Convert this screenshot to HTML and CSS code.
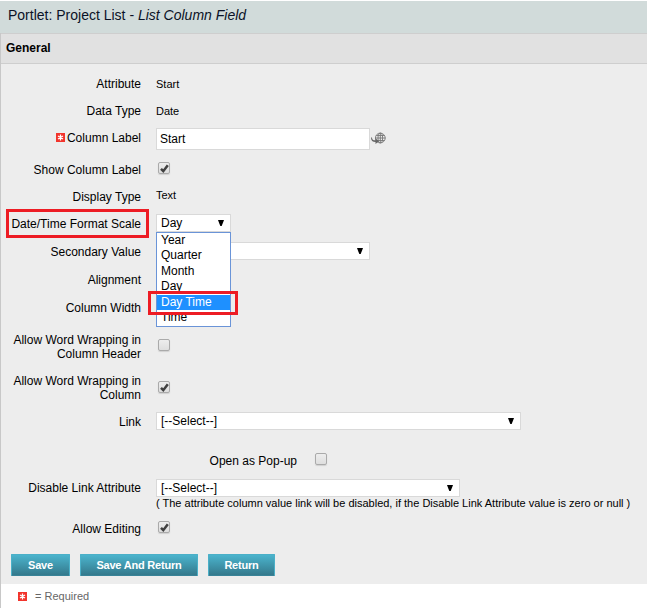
FILE: index.html
```html
<!DOCTYPE html>
<html lang="en">
<head>
<meta charset="utf-8">
<title>Portlet: Project List</title>
<link rel="stylesheet" href="styles.css">
</head>
<body>
<svg class="defs" aria-hidden="true">
  <symbol id="star" viewBox="0 0 9 9"><rect width="9" height="9" fill="#f2342c"/><path d="M4.5 1.5v6M2 3l5 3M7 3L2 6" stroke="#fff" stroke-width="1.300"/></symbol>
  <symbol id="tick" viewBox="0 0 13 13"><path d="M3 6.800l2.300 2.400L9.800 3.300" fill="none" stroke="#404040" stroke-width="2.500"/></symbol>
  <symbol id="arrow" viewBox="0 0 6 6"><path d="M0 0h6L3.700 6H2.300z" fill="#000"/></symbol>
</svg>
<header class="title">Portlet: Project List - <em>List Column Field</em></header>
<main class="frame">
  <h2 class="section">General</h2>
  <form class="form">
    <div class="row h27"><span class="label">Attribute</span><span class="value">Start</span></div>
    <div class="row h27"><span class="label">Data Type</span><span class="value">Date</span></div>
    <div class="row h29"><span class="label up"><svg class="star"><use href="#star"/></svg>Column Label</span><span class="input">Start</span>
      <svg class="globe" viewBox="0 0 15 13"><g fill="none" stroke="#777" stroke-width="0.900"><circle cx="9.300" cy="6" r="4.900"/><ellipse cx="9.300" cy="6" rx="2.300" ry="4.900"/><path d="M9.300 1v10M4.500 6h10M5.300 3.500h8M5.300 8.500h8"/></g><path d="M1 5.500C1 7.500 2 8.300 4.500 8.300V6.300L8 9.300 4.500 12v-1.900C1.500 10.100 0 8.500 0 5.500z" fill="#666"/></svg>
    </div>
    <div class="row h30"><span class="label down">Show Column Label</span><span class="check"><svg><use href="#tick"/></svg></span></div>
    <div class="row h27"><span class="label">Display Type</span><span class="value raised">Text</span></div>
    <div class="row h28"><span class="label">Date/Time Format Scale<i class="mark mark-label"></i></span>
      <span class="select scale">Day<svg class="arrow"><use href="#arrow"/></svg>
        <span class="menu"><span>Year</span><span>Quarter</span><span>Month</span><span>Day</span><span class="active">Day Time</span><span>Time</span><i class="mark mark-option"></i></span>
      </span>
    </div>
    <div class="row h28"><span class="label">Secondary Value</span><span class="select secondary"><svg class="arrow"><use href="#arrow"/></svg></span></div>
    <div class="row h28"><span class="label">Alignment</span></div>
    <div class="row h28"><span class="label">Column Width</span></div>
    <div class="row h46"><span class="label down">Allow Word Wrapping in Column Header</span><span class="check"></span></div>
    <div class="row h40"><span class="label">Allow Word Wrapping in Column</span><span class="check raised"><svg><use href="#tick"/></svg></span></div>
    <div class="row h27"><span class="label">Link</span><span class="select link">[--Select--]<svg class="arrow"><use href="#arrow"/></svg></span></div>
    <div class="row popup"><span class="label">Open as Pop-up</span><span class="check raised"></span></div>
    <div class="row h28"><span class="label">Disable Link Attribute</span><span class="select disable">[--Select--]<svg class="arrow"><use href="#arrow"/></svg></span></div>
    <p class="note">( The attribute column value link will be disabled, if the Disable Link Attribute value is zero or null )</p>
    <div class="row h28"><span class="label nudge">Allow Editing</span><span class="check raised"><svg><use href="#tick"/></svg></span></div>
    <div class="actions"><button type="button" class="save">Save</button><button type="button" class="save-return">Save And Return</button><button type="button" class="return">Return</button></div>
  </form>
  <footer class="legend"><svg class="star"><use href="#star"/></svg>= Required</footer>
</main>
</body>
</html>
```
FILE: styles.css
```css
* { box-sizing: border-box; }
body { margin: 0; padding-top: 1px; width: 647px; height: 608px; overflow: hidden; background: #fff; font: 12px/14px "Liberation Sans", Arial, sans-serif; color: #000; }
.defs { position: absolute; width: 0; height: 0; }
.title { height: 32px; background: #d1dbda; padding: 6px 0 0 8px; font-size: 14px; line-height: 17px; color: #0b1226; }
.frame { height: 575px; border-left: 1px solid #c8c8c8; }
.section { margin: 0; height: 31px; background: #e1e1e1; border: solid #cecece; border-width: 1px 0; padding-left: 5px; font-size: 12px; line-height: 29px; }
.form { height: 520px; padding-top: 6px; background: #ededed; }
.row { display: flex; align-items: center; }
.h27 { height: 27px; }
.h28 { height: 28px; }
.h29 { height: 29px; }
.h30 { height: 30px; }
.h40 { height: 40px; }
.h46 { height: 46px; }
.label { position: relative; width: 140px; padding-left: 5px; margin-right: 15px; text-align: right; flex: none; }
.up { margin-bottom: 2px; }
.down { margin-top: 3px; }
.nudge { margin-top: 2px; }
.value { font-size: 11px; }
.star { width: 9px; height: 9px; margin-right: 2px; }
.input { width: 214px; height: 22px; border: 1px solid #d9d9d9; background: #fff; padding-left: 3px; line-height: 20px; }
.globe { width: 15px; height: 13px; margin-left: 1px; }
.check { display: block; width: 12px; height: 12px; margin-left: 2px; border: 1px solid #aaa; border-radius: 2px; background: linear-gradient(#ededed, #dedede); box-shadow: 0 1px 1px #d0d0d0; }
.check svg { display: block; width: 13px; height: 13px; margin: -1px; }
.raised { margin-bottom: 3px; }
.select { position: relative; display: flex; align-items: center; justify-content: space-between; height: 18px; margin-bottom: 2px; padding: 0 6px 0 4px; border: 1px solid #d9d9d9; background: #fff; }
.arrow { width: 6px; height: 6px; margin-left: auto; }
.scale { width: 75px; }
.secondary { width: 214px; }
.link { width: 365px; margin-bottom: 1px; }
.disable { width: 304px; margin-bottom: 0; }
.menu { position: absolute; z-index: 2; left: -1px; top: 17px; width: 75px; height: 95px; border: 1px solid #6a94d8; background: #fff; display: grid; grid-template-rows: 15px 16px 15px 16px 15px 16px; line-height: 15px; }
.menu span { padding-left: 4px; }
.menu .active { background: #1e90ff; color: #fff; }
.mark { position: absolute; border: 3px solid #ed1c24; }
.mark-label { left: 5px; top: -8px; width: 143px; height: 29px; }
.mark-option { left: -9px; top: 58px; width: 90px; height: 24px; }
.popup { height: 39px; padding-top: 12px; }
.popup .label { width: 296px; margin-right: 16px; }
.note { margin: -5px 0 4px 155px; height: 13px; font-size: 11px; line-height: 13px; white-space: nowrap; }
.actions { display: flex; gap: 10px; margin: 12px 0 0 10px; }
.actions button { height: 22px; padding: 0; border: 1px solid #4bb0c8; border-bottom-color: #388398; border-radius: 1px; background: linear-gradient(#4bb4cd, #34798c); color: #fff; font: bold 11px/20px "Liberation Sans", Arial, sans-serif; letter-spacing: -0.200px; }
.actions .save { width: 59px; }
.actions .save-return { width: 118px; }
.actions .return { width: 67px; }
.legend { display: flex; align-items: center; height: 24px; padding-left: 17px; font-size: 11px; color: #666; }
.legend .star { margin-right: 8px; }
```
